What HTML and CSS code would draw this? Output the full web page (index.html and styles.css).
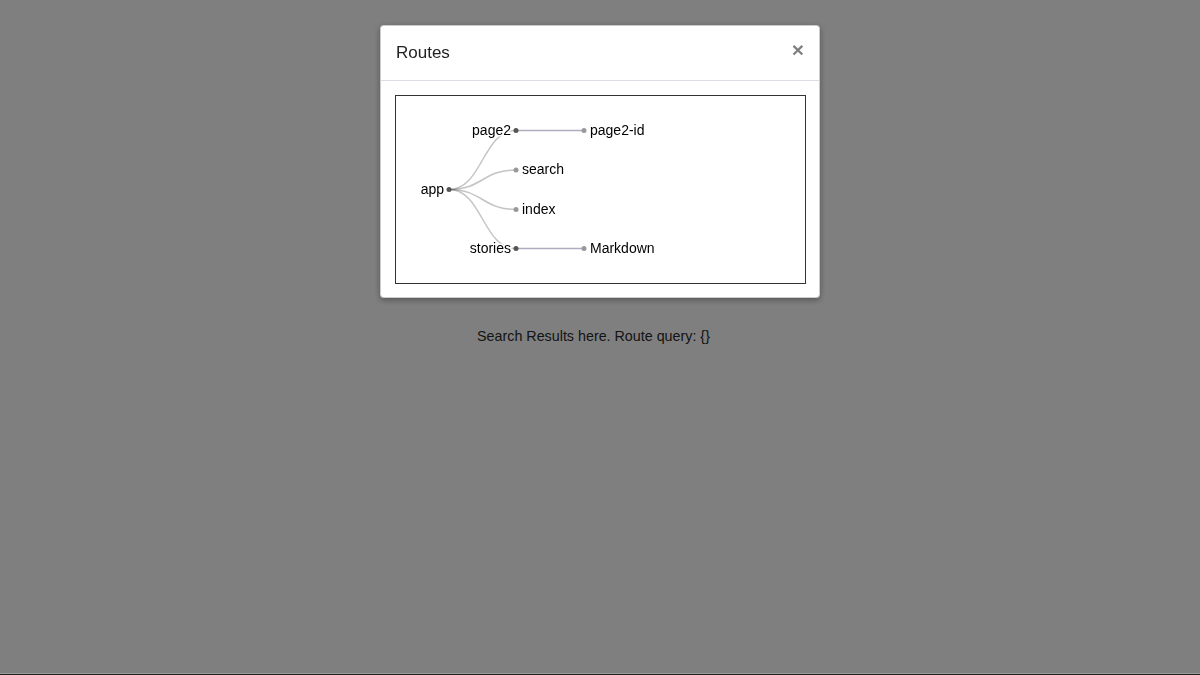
FILE: index.html
```html
<!DOCTYPE html>
<html lang="en">
<head>
<meta charset="UTF-8">
<meta name="viewport" content="width=device-width, initial-scale=1.0">
<title>Routes</title>
<link rel="stylesheet" href="styles.css">
</head>
<body>
<div class="page">
  <p class="results">Search Results here. Route query: {}</p>
</div>

<div class="backdrop"></div>

<div class="modal">
  <div class="modal-dialog">
    <div class="modal-header">
      <h4 class="modal-title">Routes</h4>
      <button type="button" class="close">&times;</button>
    </div>
    <div class="modal-body">
      <svg class="tree" width="411" height="189" viewBox="0 0 409 187">
        <g transform="translate(0,0.5)">
          <g class="links">
            <path d="M53,93 C86.5,93 86.5,34 120,34"/>
            <path d="M53,93 C86.5,93 86.5,73.5 120,73.5"/>
            <path d="M53,93 C86.5,93 86.5,113 120,113"/>
            <path d="M53,93 C86.5,93 86.5,152 120,152"/>
            <path class="straight" d="M120,34 C154,34 154,34 188,34"/>
            <path class="straight" d="M120,152 C154,152 154,152 188,152"/>
          </g>
          <g class="nodes">
            <g transform="translate(53,93)"><circle r="2.5" class="parent"/><text dy="0.31em" x="-5" text-anchor="end">app</text></g>
            <g transform="translate(120,34)"><circle r="2.5" class="parent"/><text dy="0.31em" x="-5" text-anchor="end">page2</text></g>
            <g transform="translate(120,73.5)"><circle r="2.5"/><text dy="0.31em" x="6">search</text></g>
            <g transform="translate(120,113)"><circle r="2.5"/><text dy="0.31em" x="6">index</text></g>
            <g transform="translate(120,152)"><circle r="2.5" class="parent"/><text dy="0.31em" x="-5" text-anchor="end">stories</text></g>
            <g transform="translate(188,34)"><circle r="2.5"/><text dy="0.31em" x="6">page2-id</text></g>
            <g transform="translate(188,152)"><circle r="2.5"/><text dy="0.31em" x="6">Markdown</text></g>
          </g>
        </g>
      </svg>
    </div>
  </div>
</div>

<div class="bottom-edge"></div>
</body>
</html>
```

FILE: styles.css
```css
html, body {
    margin: 0;
    height: 100%;
}

body {
    background-color: #fff;
    color: #2a2a2a;
    font-family: "Liberation Sans", Arial, sans-serif;
    font-size: 14px;
    overflow: hidden;
}

.page {
    padding: 326px 13px 0 0;
    text-align: center;
}

.results {
    margin: 0;
    font-size: 14.3px;
    line-height: 20px;
}

.backdrop {
    position: fixed;
    inset: 0;
    background-color: rgba(0, 0, 0, 0.5);
}

.modal {
    position: fixed;
    inset: 0;
}

.modal-dialog {
    width: 440px;
    margin: 25px auto 0;
    background-color: #fff;
    border: 1px solid rgba(0, 0, 0, 0.2);
    border-radius: 4px;
    box-shadow: 0 2px 6px rgba(0, 0, 0, 0.35);
    box-sizing: border-box;
}

.modal-header {
    display: flex;
    justify-content: space-between;
    align-items: flex-start;
    padding: 14px 15px 14px;
    border-bottom: 1px solid #dcdde8;
}

.modal-title {
    margin: 0;
    font-size: 17px;
    font-weight: normal;
    line-height: 25.7px;
    color: #222;
}

.close {
    padding: 0;
    margin-top: -1px;
    background: none;
    border: none;
    font-family: "Liberation Sans", Arial, sans-serif;
    font-size: 21px;
    font-weight: bold;
    line-height: 1;
    color: #000;
    opacity: 0.5;
    cursor: pointer;
}

.modal-body {
    padding: 14px 13px 13px 14px;
}

.tree {
    display: block;
    border: 1px solid #333;
    box-sizing: border-box;
    background-color: #fff;
}

.links path {
    fill: none;
    stroke: #555;
    stroke-opacity: 0.35;
    stroke-width: 1.5;
}

.links path.straight {
    stroke: #6a6a8a;
    stroke-opacity: 0.55;
}

.nodes circle {
    fill: #999;
}

.nodes circle.parent {
    fill: #555;
}

.nodes text {
    font-family: "Liberation Sans", Arial, sans-serif;
    font-size: 14px;
    fill: #000;
    stroke: #fff;
    stroke-width: 3;
    stroke-linejoin: round;
    paint-order: stroke;
}

.bottom-edge {
    position: fixed;
    left: 0;
    right: 0;
    bottom: 0;
    height: 1px;
    border-top: 1px solid #999;
    background-color: #222;
}
```
